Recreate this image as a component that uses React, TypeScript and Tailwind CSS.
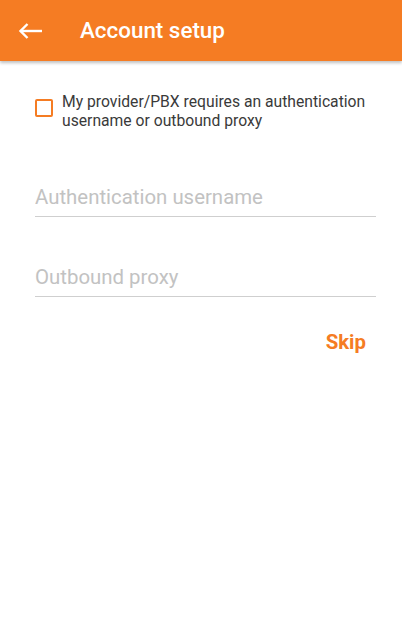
import React from "react";

export default function App() {
  return (
    <div className="w-[402px] h-[636px] bg-white" style={{ fontFamily: "Roboto, 'Noto Sans', sans-serif" }}>
      <header className="h-[61px] bg-[#f57c23] flex items-center shadow-[0_2px_3px_rgba(0,0,0,0.25)] relative">
        <button className="ml-[18px] w-[24px] h-[16px] flex items-center justify-center">
          <svg width="24" height="16" viewBox="0 0 24 16" fill="none" stroke="white" strokeWidth="2.4" strokeLinecap="butt">
            <path d="M24 8H2.5" />
            <path d="M9.5 1L2.5 8l7 7" />
          </svg>
        </button>
        <h1 className="ml-[38px] text-white text-[22.4px] font-medium leading-none">Account setup</h1>
      </header>

      <div className="px-[35px] pt-[31px]">
        <label className="flex items-start gap-[9px]">
          <span className="mt-[7px] w-[18px] h-[18px] shrink-0 rounded-[2px] border-2 border-[#f57c23]" />
          <span className="text-[15.7px] leading-[19px] text-[#3a3a3a]">
            My provider/PBX requires an authentication username or outbound proxy
          </span>
        </label>

        <div className="mt-[39px] flex flex-col gap-[32px]">
          <div className="w-[341px] h-[48px] flex items-end border-b border-[#cfcfcf] pb-[5px]">
            <input
              className="w-full text-[20.4px] leading-[28px] outline-none placeholder:text-[#c2c2c2] bg-transparent"
              placeholder="Authentication username"
            />
          </div>
          <div className="w-[341px] h-[48px] flex items-end border-b border-[#cfcfcf] pb-[5px]">
            <input
              className="w-full text-[20.4px] leading-[28px] outline-none placeholder:text-[#c2c2c2] bg-transparent"
              placeholder="Outbound proxy"
            />
          </div>
        </div>

        <div className="flex justify-end pr-[1px] mt-[35px]">
          <button className="text-[#f57c23] font-bold text-[20.4px] leading-[20px]">Skip</button>
        </div>
      </div>
    </div>
  );
}
